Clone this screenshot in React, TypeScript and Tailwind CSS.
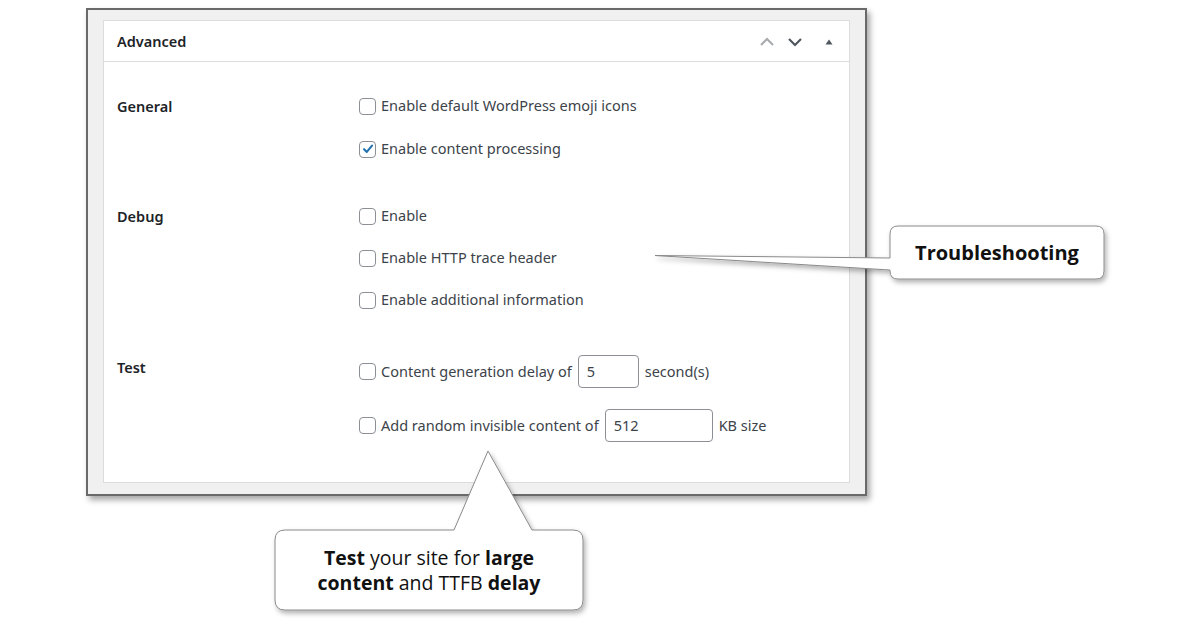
import React from 'react';

type Opt = { label: string; checked?: boolean; input?: { value: string; width: string }; suffix?: string };

const sections: { title: string; rows: Opt[] }[] = [
  {
    title: 'General',
    rows: [{ label: 'Enable default WordPress emoji icons' }, { label: 'Enable content processing', checked: true }],
  },
  {
    title: 'Debug',
    rows: [{ label: 'Enable' }, { label: 'Enable HTTP trace header' }, { label: 'Enable additional information' }],
  },
  {
    title: 'Test',
    rows: [
      { label: 'Content generation delay of', input: { value: '5', width: 'w-[61px]' }, suffix: 'second(s)' },
      { label: 'Add random invisible content of', input: { value: '512', width: 'w-[108px]' }, suffix: 'KB size' },
    ],
  },
];

function Checkbox({ checked }: { checked?: boolean }) {
  return (
    <span className="flex h-[17px] w-[17px] shrink-0 items-center justify-center rounded-[4px] border border-[#8c8f94] bg-white">
      {checked && (
        <svg viewBox="0 0 16 16" className="h-[14px] w-[14px]">
          <path d="M3.5 8.2 L6.6 11.3 L12.6 4.2" fill="none" stroke="#2271b1" strokeWidth="2.4" strokeLinecap="round" strokeLinejoin="round" />
        </svg>
      )}
    </span>
  );
}

function Row({ opt }: { opt: Opt }) {
  return (
    <div className={`flex items-center gap-[5px] ${opt.input ? 'h-[33px]' : 'h-[24px]'}`}>
      <Checkbox checked={opt.checked} />
      <span>{opt.label}</span>
      {opt.input && (
        <span className={`ml-[1px] flex h-[33px] ${opt.input.width} items-center rounded-[4px] border border-[#8c8f94] bg-white px-[8px]`}>
          {opt.input.value}
        </span>
      )}
      {opt.suffix && <span className="ml-[1px]">{opt.suffix}</span>}
    </div>
  );
}

export default function App() {
  return (
    <div className="relative h-[628px] w-[1200px] overflow-hidden bg-white font-['Noto_Sans',sans-serif]">
      {/* settings frame */}
      <div className="ml-[86px] mt-[8px] h-[488px] w-[781px] border-2 border-[#6a6a6a] bg-[#f0f0f1] px-[15px] pb-[11px] pt-[10px] shadow-[3px_4px_6px_rgba(0,0,0,0.35)]">
        <div className="h-full border border-[#dcdcde] bg-white text-[14.5px] text-[#3c434a]">
          <div className="flex h-[41px] items-center justify-between border-b border-[#dcdcde] pl-[13px] pr-[10px] pt-[2px]">
            <span className="font-semibold text-[#1d2327]">Advanced</span>
            <div className="flex items-center">
              <svg viewBox="0 0 20 20" className="h-[20px] w-[20px]">
                <path d="M4 13 L10 7 L16 13" fill="none" stroke="#a7aaad" strokeWidth="2" />
              </svg>
              <svg viewBox="0 0 20 20" className="ml-[8px] h-[20px] w-[20px]">
                <path d="M4 7 L10 13 L16 7" fill="none" stroke="#50575e" strokeWidth="2.2" />
              </svg>
              <svg viewBox="0 0 20 20" className="ml-[14px] h-[20px] w-[20px]">
                <path d="M6.5 12.5 L10 7.5 L13.5 12.5 Z" fill="#50575e" />
              </svg>
            </div>
          </div>
          <div className="pl-[13px] pt-[32px]">
            {sections.map((s, i) => (
              <div key={s.title} className={`flex ${i > 0 ? 'mt-[43px]' : ''}`}>
                <div className="w-[242px] pt-[1px] font-semibold leading-[22px] text-[#1d2327]">{s.title}</div>
                <div className={`flex flex-col ${s.title === 'Test' ? 'gap-[21px]' : s.title === 'Debug' ? 'gap-[18px]' : 'gap-[19px]'}`}>
                  {s.rows.map((r) => (
                    <Row key={r.label} opt={r} />
                  ))}
                </div>
              </div>
            ))}
          </div>
        </div>
      </div>

      {/* callouts */}
      <svg className="pointer-events-none absolute left-0 top-0" width="1200" height="628">
        <defs>
          <filter id="sh" x="-10%" y="-10%" width="130%" height="140%">
            <feDropShadow dx="2" dy="3" stdDeviation="2.5" floodColor="#000" floodOpacity="0.3" />
          </filter>
        </defs>
        <path
          d="M898 226 H1096 Q1104 226 1104 234 V271 Q1104 279 1096 279 H898 Q890 279 890 271 V270 L655 255.5 L890 258 V234 Q890 226 898 226 Z"
          fill="#fff"
          stroke="#8a8a8a"
          strokeWidth="1"
          filter="url(#sh)"
        />
        <path
          d="M285 530 H454 L488 451 L532 530 H573 Q583 530 583 540 V600 Q583 610 573 610 H285 Q275 610 275 600 V540 Q275 530 285 530 Z"
          fill="#fff"
          stroke="#8a8a8a"
          strokeWidth="1"
          filter="url(#sh)"
        />
      </svg>
      <div className="absolute left-[890px] top-[226px] flex h-[53px] w-[214px] items-center justify-center font-['Open_Sans',sans-serif] text-[20px] font-bold text-[#111]">
        Troubleshooting
      </div>
      <div className="absolute left-[275px] top-[530px] flex h-[80px] w-[308px] flex-col items-center justify-center font-['Open_Sans',sans-serif] text-[19.5px] leading-[25px] text-[#111]">
        <span>
          <b>Test</b> your site for <b>large</b>
        </span>
        <span>
          <b>content</b> and TTFB <b>delay</b>
        </span>
      </div>
    </div>
  );
}
